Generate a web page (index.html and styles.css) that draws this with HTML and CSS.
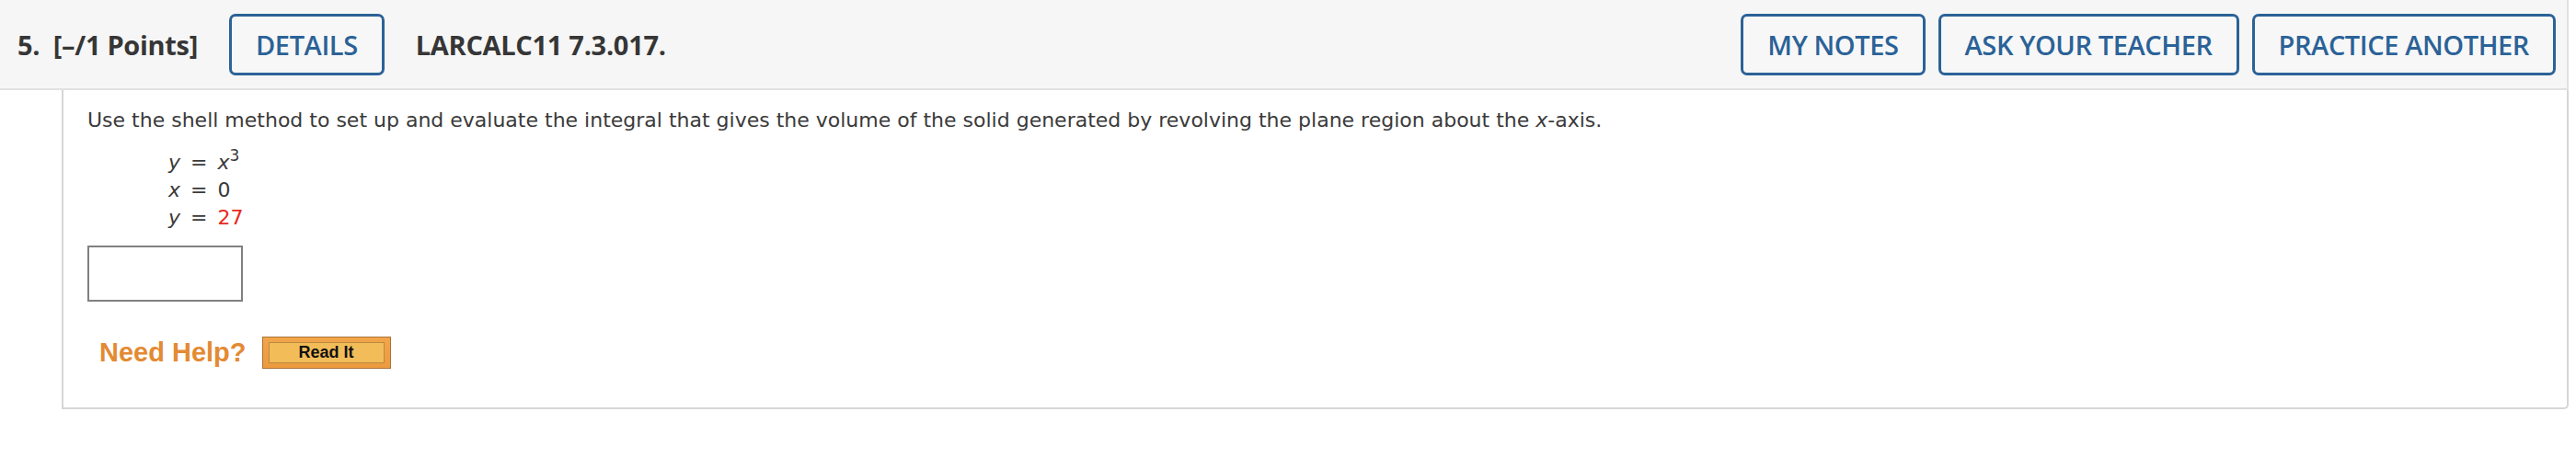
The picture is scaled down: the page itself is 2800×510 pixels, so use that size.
FILE: index.html
```html
<!DOCTYPE html>
<html>
<head>
<meta charset="utf-8">
<link rel="stylesheet" href="styles.css">
</head>
<body>
<div class="question">
  <div class="q-header">
    <div class="q-left">
      <span class="q-points">5.&nbsp; [–/1 Points]</span>
      <button class="q-btn">DETAILS</button>
      <span class="q-code">LARCALC11 7.3.017.</span>
    </div>
    <div class="q-right">
      <button class="q-btn">MY NOTES</button>
      <button class="q-btn">ASK YOUR TEACHER</button>
      <button class="q-btn">PRACTICE ANOTHER</button>
    </div>
  </div>
  <div class="q-body">
    <p class="q-text">Use the shell method to set up and evaluate the integral that gives the volume of the solid generated by revolving the plane region about the <i>x</i>-axis.</p>
    <div class="math">
      <div class="math-line"><i>y</i><span class="op">=</span><i>x</i><sup>3</sup></div>
      <div class="math-line"><i>x</i><span class="op">=</span>0</div>
      <div class="math-line"><i>y</i><span class="op">=</span><span class="red">27</span></div>
    </div>
    <div class="answer-box"></div>
    <div class="help">
      <span class="help-label">Need Help?</span>
      <span class="read-it"><span class="read-it-inner">Read It</span></span>
    </div>
  </div>
</div>
</body>
</html>
```

FILE: styles.css
```css
html, body {
  margin: 0;
  padding: 0;
  background: #ffffff;
}

.question {
  width: 2792px;
}

.q-header {
  display: flex;
  justify-content: space-between;
  align-items: center;
  height: 98px;
  box-sizing: border-box;
  background: #f6f6f6;
  border-bottom: 2px solid #e1e1e1;
  border-right: 2px solid #e1e1e1;
  padding: 0 12px 0 19px;
  font-family: "Open Sans", sans-serif;
}

.q-left,
.q-right {
  display: flex;
  align-items: center;
}

.q-left {
  gap: 34px;
}

.q-right {
  gap: 14px;
}

.q-points,
.q-code {
  font-size: 29px;
  font-weight: 700;
  color: #363636;
  letter-spacing: -0.3px;
}

.q-btn {
  font-family: "Open Sans", sans-serif;
  font-size: 29px;
  font-weight: 600;
  color: #2b6297;
  background: #f7f7f7;
  border: 3px solid #2b6297;
  border-radius: 7px;
  height: 67px;
  padding: 0 26px;
  letter-spacing: -0.4px;
  margin: 0;
}

.q-body {
  margin-left: 67px;
  border: 2px solid #d6d6d6;
  border-top: none;
  border-radius: 0 0 5px 0;
  padding: 16px 26px 42px 26px;
  font-family: "DejaVu Sans", Verdana, sans-serif;
  color: #3a3a3a;
}

.q-text {
  margin: 0;
  font-size: 22px;
  line-height: 34px;
}

.math {
  margin: 14px 0 0 88px;
  font-size: 22px;
}

.math-line {
  height: 30px;
  line-height: 30px;
}

.math sup {
  font-size: 17px;
  line-height: 0;
  vertical-align: 9px;
}

.op {
  margin: 0 11px;
}

.red {
  color: #e8291c;
}

.answer-box {
  margin-top: 15px;
  width: 169px;
  height: 61px;
  box-sizing: border-box;
  border: 2px solid #808080;
}

.help {
  display: flex;
  align-items: center;
  gap: 17px;
  margin-top: 38px;
  padding-left: 13px;
}

.help-label {
  font-family: "Liberation Sans", Arial, sans-serif;
  font-size: 29px;
  font-weight: 700;
  color: #e38a33;
}

.read-it {
  display: inline-flex;
  box-sizing: border-box;
  width: 140px;
  height: 35px;
  padding: 5px 6px;
  border: 1px solid #a9733a;
  background: linear-gradient(#f3a54a, #ec9a3d);
}

.read-it-inner {
  flex: 1;
  display: flex;
  align-items: center;
  justify-content: center;
  border: 1px solid #b98a44;
  background: #f2bd58;
  font-family: "Liberation Sans", Arial, sans-serif;
  font-size: 18px;
  font-weight: 700;
  color: #111;
}
```
